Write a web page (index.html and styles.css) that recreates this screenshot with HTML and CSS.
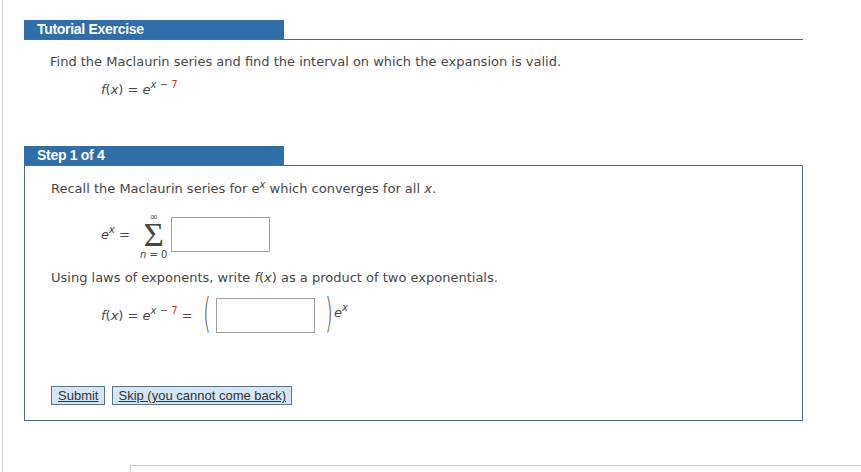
FILE: index.html
```html
<!DOCTYPE html>
<html>
<head>
<meta charset="utf-8">
<link rel="stylesheet" href="styles.css">
</head>
<body>
<div class="page">
  <div class="head"><div class="tab">Tutorial Exercise</div></div>
  <div class="intro">
    <p class="txt">Find the Maclaurin series and find the interval on which the expansion is valid.</p>
    <div class="math m1"><i>f</i>(<i>x</i>) = <i>e</i><sup><i>x</i> &minus; <span class="red">7</span></sup></div>
  </div>
  <div class="head step-head"><div class="tab">Step 1 of 4</div></div>
  <div class="step">
    <p class="txt">Recall the Maclaurin series for e<sup class="s"><i>x</i></sup> which converges for all <i>x</i>.</p>
    <div class="math sumrow">
      <span class="lhs"><i>e</i><sup><i>x</i></sup> =</span>
      <span class="sigma"><span class="lim">&infin;</span><span class="sig">&Sigma;</span><span class="lim"><i>n</i> = 0</span></span>
      <span class="box b1"></span>
    </div>
    <p class="txt t2">Using laws of exponents, write <i>f</i>(<i>x</i>) as a product of two exponentials.</p>
    <div class="math prodrow">
      <span><i>f</i>(<i>x</i>) = <i>e</i><sup><i>x</i> &minus; <span class="red">7</span></sup> =</span>
      <span class="paren">(</span><span class="box b2"></span><span class="paren">)</span><span class="ex"><i>e</i><sup><i>x</i></sup></span>
    </div>
    <div class="btns">
      <span class="btn btn-wide">Submit</span>
      <span class="btn">Skip (you cannot come back)</span>
    </div>
  </div>
  <div class="foot"></div>
</div>
</body>
</html>
```
FILE: styles.css
```css
html, body { margin: 0; padding: 0; background: #fff; }
body { font-family: "DejaVu Sans", Verdana, sans-serif; font-size: 13px; color: #474747; }
.page {
  margin-left: 2px;
  border-left: 1px solid #d4d4d4;
  padding: 20px 0 0 21px;
  height: 452px;
  width: 780px;
}
.head { border-bottom: 1px solid #4f6d80; width: 779px; height: 19px; }
.tab {
  width: 247px; height: 19px; background: #2f6ea9; color: #fff;
  font-family: "Liberation Sans", Arial, sans-serif; font-weight: bold; font-size: 14px;
  line-height: 18px; padding-left: 13px; letter-spacing: -0.3px;
}
.intro { padding: 14px 0 0 26px; height: 92px; }
.txt { margin: 0; line-height: 16px; }
.math { color: #474747; }
.math sup { font-size: 10px; vertical-align: 6px; line-height: 0; }
.red { color: #c0392b; }
.m1 { margin: 12px 0 0 51px; }
.step-head { margin-top: 0; border-bottom: none; height: 19px; }
.step {
  border: 1px solid #4f6d80; width: 751px; height: 228px;
  padding: 15px 0 11px 26px;
}
.s { font-size: 10px; vertical-align: 5px; line-height: 0; }
.sumrow { display: flex; align-items: center; margin: 14px 0 0 50px; height: 50px; }
.lhs { margin-right: 10px; margin-top: -4px; }
.sigma { display: flex; flex-direction: column; align-items: center; gap: 1px; }
.lim { font-size: 10px; line-height: 10px; height: 10px; }
.sig { font-family: "Liberation Serif", serif; font-size: 35px; line-height: 26px; height: 26px; transform: scaleY(0.95); }
.box { display: inline-block; border: 1px solid #a0a0a0; background: #fff; }
.b1 { width: 97px; height: 33px; margin-left: 4px; margin-top: -4px; }
.t2 { margin-top: 9px; }
.prodrow { display: flex; align-items: center; margin: 11px 0 0 50px; height: 36px; }
.paren { font-size: 40px; font-weight: 100; line-height: 36px; color: #555; margin: -4px 2px 0 6px; transform: scaleX(0.5); display: inline-block; }
.b2 { width: 97px; height: 33px; }
.ex { margin-top: -6px; margin-left: -5px; }
.btns { margin-top: 53px; display: flex; gap: 7px; }
.btn {
  font-family: "Liberation Sans", Arial, sans-serif; font-size: 13px; color: #333;
  background: #d5e5f5; border: 1px solid #5c7689; text-decoration: underline;
  height: 17px; line-height: 17px; padding: 0 5px;
}
.btn-wide { padding: 0 6px; }
.foot {
  margin: 44px 0 0 106px; border-top: 1px solid #c8c8c8; border-left: 1px solid #c8c8c8;
  height: 20px; width: 730px;
}
```
